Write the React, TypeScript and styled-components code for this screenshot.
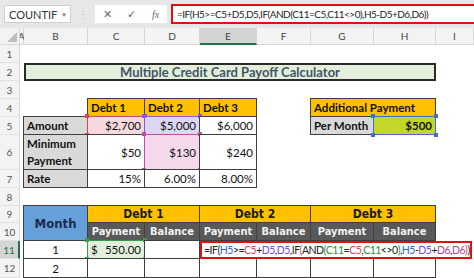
import React from "react";
import styled, { createGlobalStyle } from "styled-components";

const GlobalStyle = createGlobalStyle`
  html, body { margin: 0; padding: 0; background: #ffffff; }
  body { font-family: Lato, "Liberation Sans", sans-serif; overflow: hidden; }
`;

const ref = {
  blue: "#3366cc",
  red: "#d2455a",
  purple: "#7a4cc8",
  green: "#2e8b3a",
  magenta: "#b6449c",
};

const Frame = styled.div`
  width: 474px;
  height: 278px;
  overflow: hidden;
  display: flex;
  flex-direction: column;
`;

const FormulaBar = styled.div`
  height: 28px;
  flex: none;
  display: flex;
  align-items: center;
  padding-left: 4px;
  background: #e7e7e7;
  box-sizing: border-box;
`;

const NameBox = styled.div`
  width: 67px;
  height: 18px;
  box-sizing: border-box;
  background: #fff;
  border: 1px solid #d0d0d0;
  display: flex;
  align-items: center;
  justify-content: space-between;
  padding: 0 3px 0 4px;
  font-size: 11px;
  color: #333;
`;

const Caret = styled.span`
  font-size: 6px;
  color: #777;
`;

const Dots = styled.div`
  width: 24px;
  text-align: center;
  color: #b5b5b5;
  font-size: 10px;
`;

const FxBox = styled.div`
  width: 72px;
  height: 18px;
  background: #fff;
  display: flex;
  align-items: center;
  justify-content: space-around;
  color: #666;
  font-size: 11px;
  margin-right: 4px;
`;

const Fx = styled.span`
  font-family: "Liberation Serif", serif;
  font-style: italic;
  font-size: 10px;
`;

const FormulaInput = styled.div`
  flex: 1;
  height: 20px;
  box-sizing: border-box;
  background: #fff;
  border: 2px solid #e01010;
  border-right: none;
  display: flex;
  align-items: center;
  padding-left: 4px;
  font-size: 10px;
  letter-spacing: -0.5px;
  color: #222;
  white-space: nowrap;
  overflow: hidden;
`;

const Sheet = styled.div`
  flex: 1;
  display: grid;
  grid-template-columns: 20px 4px 64px 57px 55px 57px 54px 63px 62px 1fr;
  grid-template-rows: 17px 18px 18px 18px 18px 18px 35px 18px 18px 17px 18px 18px 19px;
`;

const Corner = styled.div`
  grid-column: 1;
  grid-row: 1;
  background: #f3f3f3;
  border-right: 1px solid #d6d6d6;
  border-bottom: 1px solid #d6d6d6;
  position: relative;
  &::after {
    content: "";
    position: absolute;
    right: 2px;
    bottom: 2px;
    border-left: 10px solid transparent;
    border-bottom: 10px solid #bdbdbd;
  }
`;

const ColHead = styled.div<{ $col: number; $active?: boolean }>`
  grid-column: ${({ $col }) => $col};
  grid-row: 1;
  background: ${({ $active }) => ($active ? "#d4d4d4" : "#f3f3f3")};
  border-right: 1px solid #d6d6d6;
  border-bottom: ${({ $active }) => ($active ? "2px solid #217346" : "1px solid #d6d6d6")};
  display: flex;
  align-items: center;
  justify-content: center;
  font-size: 10px;
  color: #444;
  overflow: visible;
  white-space: nowrap;
`;

const RowHead = styled.div<{ $row: number; $active?: boolean }>`
  grid-column: 1;
  grid-row: ${({ $row }) => $row};
  background: ${({ $active }) => ($active ? "#d4d4d4" : "#f3f3f3")};
  border-right: ${({ $active }) => ($active ? "2px solid #217346" : "1px solid #d6d6d6")};
  border-bottom: 1px solid #e2e2e2;
  display: flex;
  align-items: center;
  justify-content: center;
  font-size: 10px;
  color: ${({ $active }) => ($active ? "#217346" : "#555")};
`;

const TitleBar = styled.div`
  grid-column: 3 / 10;
  grid-row: 3;
  background: #e2efda;
  border: 2px solid #2b2b2b;
  display: flex;
  align-items: center;
  justify-content: center;
  font-weight: 700;
  font-size: 13px;
  color: #44546a;
`;

const Cell = styled.div<{
  $col: string | number;
  $row: string | number;
  $bg?: string;
  $align?: string;
  $bold?: boolean;
}>`
  grid-column: ${({ $col }) => $col};
  grid-row: ${({ $row }) => $row};
  margin: -1px 0 0 -1px;
  border: 1px solid #3f3f3f;
  background: ${({ $bg }) => $bg || "#fff"};
  position: relative;
  display: flex;
  align-items: center;
  justify-content: ${({ $align }) => $align || "flex-end"};
  padding: 0 3px;
  font-size: 11.5px;
  font-weight: ${({ $bold }) => ($bold ? 700 : 400)};
  color: #111;
  line-height: 17px;
  white-space: nowrap;
`;

const Label = styled(Cell)`
  background: #d9d9d9;
  justify-content: flex-start;
  font-weight: 700;
  white-space: normal;
`;

const Head = styled(Cell)`
  background: #ffc000;
  justify-content: flex-start;
  font-weight: 700;
`;

const BigHead = styled(Cell)`
  background: #ffc000;
  justify-content: center;
  font-family: "DejaVu Sans Condensed", "DejaVu Sans", sans-serif;
  font-stretch: condensed;
  font-weight: 700;
  font-size: 12px;
  color: #1a1a1a;
`;

const SubHead = styled(Cell)`
  background: #595959;
  justify-content: center;
  font-family: "DejaVu Sans Condensed", "DejaVu Sans", sans-serif;
  font-stretch: condensed;
  font-weight: 700;
  font-size: 11px;
  color: #f2f2f2;
`;

const MonthCell = styled(Cell)`
  background: #65a0da;
  justify-content: center;
  font-family: "DejaVu Sans Condensed", "DejaVu Sans", sans-serif;
  font-stretch: condensed;
  font-weight: 700;
  font-size: 13px;
  color: #1c2b4a;
`;

const Sel = styled.div<{ $c: string }>`
  position: absolute;
  inset: -1px;
  border: 1px solid ${({ $c }) => $c};
  pointer-events: none;
  & > span {
    position: absolute;
    width: 4px;
    height: 4px;
    background: ${({ $c }) => $c};
  }
  & > span:nth-child(1) { left: -3px; top: -3px; }
  & > span:nth-child(2) { right: -3px; top: -3px; }
  & > span:nth-child(3) { left: -3px; bottom: -3px; }
  & > span:nth-child(4) { right: -3px; bottom: -3px; }
`;

const Selection: React.FC<{ c: string }> = ({ c }) => (
  <Sel $c={c}>
    <span />
    <span />
    <span />
    <span />
  </Sel>
);

const Money = styled.div`
  flex: 1;
  display: flex;
  justify-content: space-between;
`;

const EditBox = styled.div`
  grid-column: 6 / 11;
  grid-row: 12;
  margin: 0 2px 0 0;
  background: #fff;
  border: 2px solid #e01010;
  display: flex;
  align-items: center;
  padding-left: 2px;
  font-size: 10.5px;
  letter-spacing: -0.5px;
  color: #222;
  white-space: nowrap;
  overflow: hidden;
  z-index: 2;
`;

const Part = styled.span<{ $c?: string }>`
  color: ${({ $c }) => $c || "#222"};
`;

const formulaParts: [string, string?][] = [
  ["=IF("],
  ["H5", ref.blue],
  [">="],
  ["C5", ref.red],
  ["+"],
  ["D5", ref.purple],
  [","],
  ["D5", ref.purple],
  [",IF"],
  ["(", ref.red],
  ["AND"],
  ["(", ref.green],
  ["C11", ref.green],
  ["="],
  ["C5", ref.red],
  [","],
  ["C11", ref.green],
  ["<>0"],
  [")", ref.green],
  [","],
  ["H5", ref.blue],
  ["-"],
  ["D5", ref.purple],
  ["+"],
  ["D6", ref.magenta],
  [","],
  ["D6", ref.magenta],
  [")", ref.red],
  [")"],
];

const cols = ["A", "B", "C", "D", "E", "F", "G", "H", "I"];

const App: React.FC = () => {
  return (
    <Frame>
      <GlobalStyle />
      <FormulaBar>
        <NameBox>
          COUNTIF <Caret>▼</Caret>
        </NameBox>
        <Dots>⋮</Dots>
        <FxBox>
          <span>✕</span>
          <span>✓</span>
          <Fx>fx</Fx>
        </FxBox>
        <FormulaInput>=IF(H5&gt;=C5+D5,D5,IF(AND(C11=C5,C11&lt;&gt;0),H5-D5+D6,D6))</FormulaInput>
      </FormulaBar>
      <Sheet>
        <Corner />
        {cols.map((c, i) => (
          <ColHead key={c} $col={i + 2} $active={c === "E"}>
            {c}
          </ColHead>
        ))}
        {Array.from({ length: 12 }, (_, i) => (
          <RowHead key={i} $row={i + 2} $active={i + 1 === 11}>
            {i + 1}
          </RowHead>
        ))}

        <TitleBar>Multiple Credit Card Payoff Calculator</TitleBar>

        <Head $col={4} $row={5}>Debt 1</Head>
        <Head $col={5} $row={5}>Debt 2</Head>
        <Head $col={6} $row={5}>Debt 3</Head>

        <Label $col={3} $row={6}>Amount</Label>
        <Cell $col={4} $row={6} $bg="#f6d9df">
          $2,700
          <Selection c="#d2455a" />
        </Cell>
        <Cell $col={5} $row={6} $bg="#ddd6f3">
          $5,000
          <Selection c="#8a5ad0" />
        </Cell>
        <Cell $col={6} $row={6}>$6,000</Cell>

        <Label $col={3} $row={7}>Minimum Payment</Label>
        <Cell $col={4} $row={7}>$50</Cell>
        <Cell $col={5} $row={7} $bg="#f4d9ec">
          $130
          <Selection c="#c0509e" />
        </Cell>
        <Cell $col={6} $row={7}>$240</Cell>

        <Label $col={3} $row={8}>Rate</Label>
        <Cell $col={4} $row={8}>15%</Cell>
        <Cell $col={5} $row={8}>6.00%</Cell>
        <Cell $col={6} $row={8}>8.00%</Cell>

        <Head $col="8 / 10" $row={5}>Additional Payment</Head>
        <Label $col={8} $row={6}>Per Month</Label>
        <Cell $col={9} $row={6} $bg="#c3d62a" $bold>
          $500
          <Selection c="#3f6fd0" />
        </Cell>

        <MonthCell $col={3} $row="10 / 12">Month</MonthCell>
        <BigHead $col="4 / 6" $row={10}>Debt 1</BigHead>
        <BigHead $col="6 / 8" $row={10}>Debt 2</BigHead>
        <BigHead $col="8 / 10" $row={10}>Debt 3</BigHead>
        {["Payment", "Balance", "Payment", "Balance", "Payment", "Balance"].map((t, i) => (
          <SubHead key={i} $col={i + 4} $row={11}>
            {t}
          </SubHead>
        ))}

        <Cell $col={3} $row={12} $align="center">1</Cell>
        <Cell $col={4} $row={12} $bg="#e2efda">
          <Money>
            <span>$</span>
            <span>550.00</span>
          </Money>
          <Selection c="#3a9a4e" />
        </Cell>
        {[5, 6, 7, 8, 9].map((c) => (
          <Cell key={c} $col={c} $row={12} />
        ))}
        <EditBox>
          {formulaParts.map(([t, c], i) => (
            <Part key={i} $c={c}>
              {t}
            </Part>
          ))}
        </EditBox>

        <Cell $col={3} $row={13} $align="center">2</Cell>
        {[4, 5, 6, 7, 8, 9].map((c) => (
          <Cell key={c} $col={c} $row={13} />
        ))}
      </Sheet>
    </Frame>
  );
};

export default App;
